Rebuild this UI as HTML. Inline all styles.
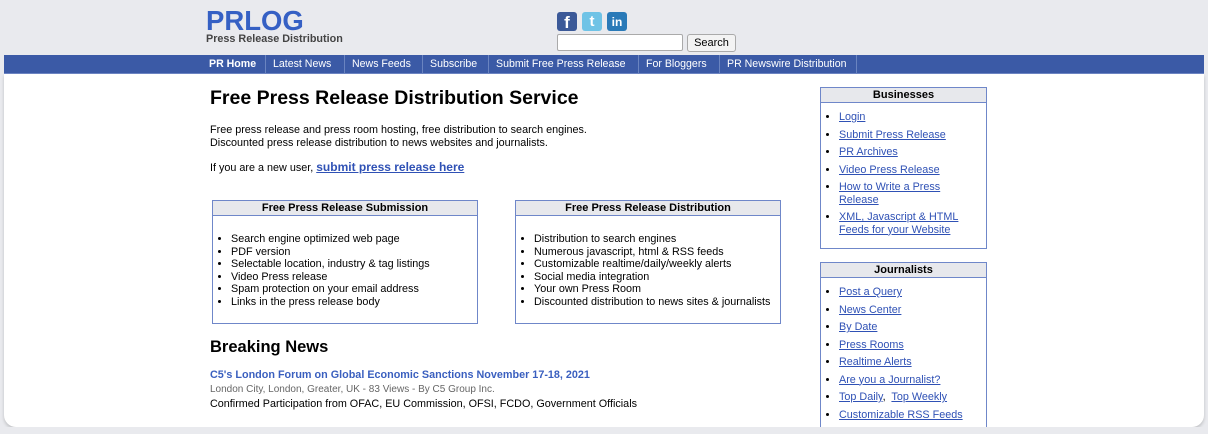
<!DOCTYPE html>
<html><head><style>
*{margin:0;padding:0;box-sizing:border-box}
body{width:1208px;height:434px;background:#e9eaee;font-family:"Liberation Sans",Arial,sans-serif;position:relative;overflow:hidden;color:#000}
.abs{position:absolute}
.card{left:4px;top:74px;width:1200px;height:353px;background:#fff;border-radius:0 0 12px 12px;box-shadow:0 2px 3px rgba(0,0,0,.18)}
.nav{left:4px;top:55px;width:1200px;height:19px;background:#3b5aa6;border-bottom:1px solid #6d86c4}
.nav span{position:absolute;top:0;height:19px;line-height:18px;color:#fff;font-size:10.6px;border-right:1px solid #6a84c0;padding:0 0 0 7px;white-space:nowrap}
.box{border:1px solid #6f87c9;background:#fff}
.box .h{background:#e7e8ec;border-bottom:1px solid #6f87c9;text-align:center;font-weight:bold;font-size:11px;height:15px;line-height:14px}
.box ul{font-size:10.8px;line-height:12.5px;margin-left:18px;margin-top:17px}
.side ul{font-size:10.8px;margin-left:18px;margin-right:18px;margin-top:8px;line-height:12.5px}
.side li{margin-bottom:5px}
a{color:#2f51b5;text-decoration:underline}
</style></head><body>
<div class="abs" style="left:206px;top:5px;font-size:27.5px;font-weight:bold;color:#3560c4">PRLOG</div>
<div class="abs" style="left:206px;top:33px;font-size:10.8px;font-weight:bold;color:#444">Press Release Distribution</div>
<div class="abs" style="left:557px;top:12px;width:20px;height:19px;background:#3b5998;border-radius:3px;color:#fff;font-weight:bold;font-size:17px;text-align:center;line-height:22px">f</div>
<div class="abs" style="left:582px;top:12px;width:20px;height:19px;background:#6fc3e6;border-radius:3px;color:#fff;font-weight:bold;font-size:15px;text-align:center;line-height:20px">t</div>
<div class="abs" style="left:607px;top:12px;width:20px;height:19px;background:#2a7ab8;border-radius:3px;color:#fff;font-weight:bold;font-size:12px;text-align:center;line-height:20px">in</div>
<div class="abs" style="left:557px;top:34px;width:126px;height:17px;background:#fff;border:1px solid #aaa;border-radius:2px"></div>
<div class="abs" style="left:687px;top:34px;width:49px;height:18px;background:#f3f3f3;border:1px solid #aaa;border-radius:3px;font-size:11px;text-align:center;line-height:16px">Search</div>
<div class="abs nav">
<span style="left:198px;font-weight:bold;width:64px">PR Home</span>
<span style="left:262px;width:79px">Latest News</span>
<span style="left:341px;width:78px">News Feeds</span>
<span style="left:419px;width:66px">Subscribe</span>
<span style="left:485px;width:150px">Submit Free Press Release</span>
<span style="left:635px;width:81px">For Bloggers</span>
<span style="left:716px;width:137px">PR Newswire Distribution</span>
</div>
<div class="abs card"></div>
<div class="abs" style="left:210px;top:87px;font-size:19.5px;font-weight:bold">Free Press Release Distribution Service</div>
<div class="abs" style="left:210px;top:124px;font-size:10.8px;line-height:12.5px">Free press release and press room hosting, free distribution to search engines.<br>Discounted press release distribution to news websites and journalists.</div>
<div class="abs" style="left:210px;top:160px;font-size:10.8px">If you are a new user, <a style="font-weight:bold;font-size:12px">submit press release here</a></div>
<div class="abs box" style="left:212px;top:200px;width:266px;height:124px"><div class="h">Free Press Release Submission</div>
<ul><li>Search engine optimized web page</li><li>PDF version</li><li>Selectable location, industry &amp; tag listings</li><li>Video Press release</li><li>Spam protection on your email address</li><li>Links in the press release body</li></ul></div>
<div class="abs box" style="left:515px;top:200px;width:266px;height:124px"><div class="h">Free Press Release Distribution</div>
<ul><li>Distribution to search engines</li><li>Numerous javascript, html &amp; RSS feeds</li><li>Customizable realtime/daily/weekly alerts</li><li>Social media integration</li><li>Your own Press Room</li><li>Discounted distribution to news sites &amp; journalists</li></ul></div>
<div class="abs" style="left:210px;top:338px;font-size:16.5px;font-weight:bold">Breaking News</div>
<div class="abs" style="left:210px;top:369px;font-size:10.8px;font-weight:bold;color:#3a5fbf">C5's London Forum on Global Economic Sanctions November 17-18, 2021</div>
<div class="abs" style="left:210px;top:384px;font-size:10px;color:#666">London City, London, Greater, UK - 83 Views - By C5 Group Inc.</div>
<div class="abs" style="left:210px;top:398px;font-size:10.8px">Confirmed Participation from OFAC, EU Commission, OFSI, FCDO, Government Officials</div>
<div class="abs box side" style="left:820px;top:87px;width:167px;height:162px"><div class="h">Businesses</div>
<ul><li><a>Login</a></li><li><a>Submit Press Release</a></li><li><a>PR Archives</a></li><li><a>Video Press Release</a></li><li><a>How to Write a Press Release</a></li><li><a>XML, Javascript &amp; HTML Feeds for your Website</a></li></ul></div>
<div class="abs box side" style="left:820px;top:262px;width:167px;height:170px;border-bottom:none"><div class="h">Journalists</div>
<ul><li><a>Post a Query</a></li><li><a>News Center</a></li><li><a>By Date</a></li><li><a>Press Rooms</a></li><li><a>Realtime Alerts</a></li><li><a>Are you a Journalist?</a></li><li><a>Top Daily</a>,&nbsp; <a>Top Weekly</a></li><li><a>Customizable RSS Feeds</a></li></ul></div>
<div class="abs" style="left:0;top:427px;width:1208px;height:7px;background:#e9eaee"></div>
</body></html>
